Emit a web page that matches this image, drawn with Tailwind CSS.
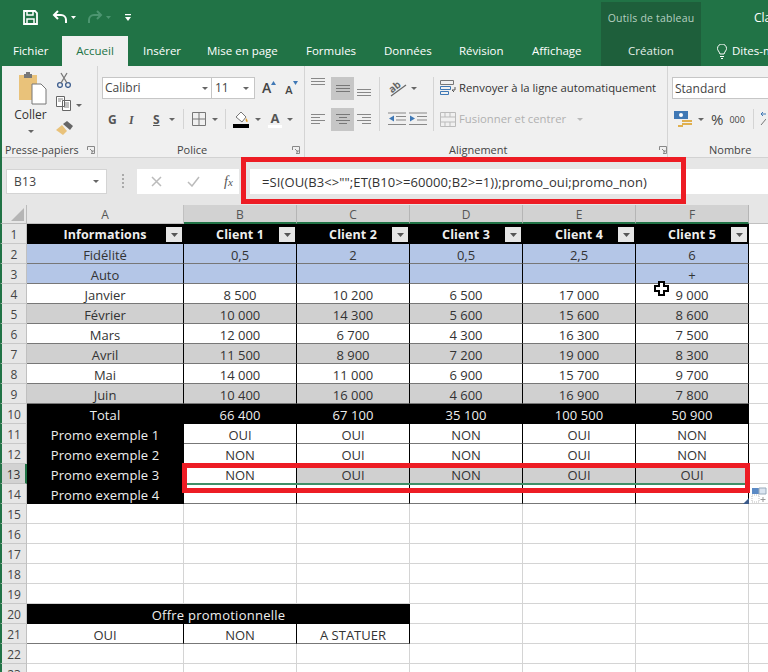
<!DOCTYPE html>
<html lang="fr">
<head>
  <meta charset="UTF-8" />
  <title>Excel - Promo</title>
  <script src="https://cdn.jsdelivr.net/npm/@tailwindcss/browser@4"></script>
</head>
<body class="bg-white">
<div class="relative w-[768px] h-[672px] overflow-hidden font-['Open_Sans',sans-serif] text-[12px] text-[#444]">

  <!-- Barre de titre -->
  <header class="flex h-[36px] bg-[#217346] text-white [&>*]:shrink-0">
    <svg class="ml-[23px] mt-[10px] w-[15px] h-[15px]" viewBox="0 0 15 15" fill="none" stroke="#fff" stroke-width="1.8"><path d="M1 1h11l2 2v11H1z"/><path d="M4 1v4h6V1M4 14V9h7v5" stroke-width="1.5"/></svg>
    <svg class="ml-[14px] mt-[10px] w-[16px] h-[15px]" viewBox="0 0 16 15" fill="none" stroke="#fff" stroke-width="2"><path d="M6 1 2 5l4 4"/><path d="M2 5h7a5 5 0 0 1 5 5v3"/></svg>
    <svg class="ml-[3px] mt-[16px] w-[5px] h-[3px]" viewBox="0 0 5 3" fill="#fff"><path d="M0 0h5L2.500 3z"/></svg>
    <svg class="ml-[11px] mt-[10px] w-[16px] h-[15px]" viewBox="0 0 16 15" fill="none" stroke="#4c9570" stroke-width="2"><path d="m10 1 4 4-4 4"/><path d="M14 5H7a5 5 0 0 0-5 5v3"/></svg>
    <svg class="ml-[3px] mt-[16px] w-[5px] h-[3px]" viewBox="0 0 5 3" fill="#4c9570"><path d="M0 0h5L2.500 3z"/></svg>
    <svg class="ml-[14px] mt-[14px] w-[6px] h-[8px]" viewBox="0 0 6 8" fill="#fff"><path d="M0 0h6v1.200H0zM0 3h6L3 7z"/></svg>
    <div class="ml-[470px] mt-[2px] w-[100px] h-[34px] bg-[#1e5f3b] text-center text-[10.5px] leading-[33px] text-[#b5cfc0] tracking-[0.2px]">Outils de tableau</div>
    <div class="ml-[53px] text-[12px] leading-[36px]">Cla</div>
  </header>

  <!-- Onglets -->
  <nav class="flex h-[30px] bg-[#217346] text-white text-[11.5px] leading-[30px] [&>*]:shrink-0">
    <span class="ml-[13px] w-[49px]">Fichier</span>
    <span class="w-[66px] bg-[#f0f0f0] text-[#217346] text-center">Accueil</span>
    <span class="ml-[15px] w-[64px]">Insérer</span>
    <span class="w-[99px]">Mise en page</span>
    <span class="w-[78px]">Formules</span>
    <span class="w-[75px]">Données</span>
    <span class="w-[73px]">Révision</span>
    <span class="w-[69px]">Affichage</span>
    <span class="w-[100px] bg-[#1e5f3b] text-center text-[#e3eee8]">Création</span>
    <svg class="ml-[16px] mt-[8px] w-[10px] h-[15px]" viewBox="0 0 10 15" fill="none" stroke="#fff"><path d="M3 10C2 7 .5 6.500.5 4.500a4.500 4.500 0 0 1 9 0C9.500 6.500 8 7 7 10zM3 12.500h4M4 14.500h2"/></svg>
    <span class="ml-[5px] whitespace-nowrap">Dites-moi</span>
  </nav>

  <div class="border-l-2 border-[#217346]">
    <!-- Ruban -->
    <section class="flex h-[92px] bg-[#f0f0f0] border-b border-[#d2d2d2] whitespace-nowrap">
      <!-- Presse-papiers -->
      <div class="w-[96px] shrink-0 border-r border-[#d4d4d4] flex flex-col">
        <div class="flex h-[77px]">
          <div class="w-[54px] pl-[3px] flex flex-col items-center pt-[6px]">
            <svg class="w-[29px] h-[33px] ml-[4px]" viewBox="0 0 29 33"><path d="M1 3h18v25H1z" fill="#e9c27a"/><path d="M6 2h8v4H6z" fill="#777"/><path d="M8 0h4v3H8z" fill="#777"/><path d="M14 12h9l5 5v15H14z" fill="#fff" stroke="#777"/></svg>
            <span class="mt-[2px] text-[12px] leading-[16px] text-[#333]">Coller</span>
            <svg class="mt-[7px] w-[6px] h-[3px]" viewBox="0 0 6 3" fill="#666"><path d="M0 0h6L3 3z"/></svg>
          </div>
          <div class="flex flex-col pt-[6px]">
            <svg class="w-[16px] h-[16px]" viewBox="0 0 16 16" fill="none" stroke="#3f5f8f" stroke-width="1.300"><circle cx="4" cy="13" r="2.400"/><circle cx="12" cy="13" r="2.400"/><path d="M5 11 11 1M11 11 5 1" stroke="#777"/></svg>
            <svg class="mt-[8px] w-[16px] h-[15px]" viewBox="0 0 16 15" fill="#fff" stroke="#666"><path d="M.5.500h8v10h-8zM6.500 4.500h8v10h-8z"/><path d="M2 3h5M2 5h3M8 7h5M8 9h5M8 11h5" stroke-width=".8"/></svg>
            <svg class="mt-[10px] w-[17px] h-[14px]" viewBox="0 0 17 14"><path d="M0 9 6 4l5 6-4 4z" fill="#e9c27a"/><path d="m7 3 4-3 6 5-3 4z" fill="#666"/></svg>
          </div>
          <svg class="ml-[3px] mt-[38px] w-[6px] h-[3px]" viewBox="0 0 6 3" fill="#666"><path d="M0 0h6L3 3z"/></svg>
        </div>
        <div class="flex items-center pl-[3px] text-[10.7px] leading-[14px] text-[#444]"><span class="w-[82px]">Presse-papiers</span><svg class="w-[8px] h-[8px]" viewBox="0 0 8 8" fill="none" stroke="#888"><path d="M.5 4V.5H7.500V7.500H4M3 3l3 3M6 4v2H4"/></svg></div>
      </div>

      <!-- Police -->
      <div class="w-[207px] shrink-0 border-r border-[#d4d4d4] flex flex-col">
        <div class="h-[77px] pl-[4px] pt-[11px]">
          <div class="flex items-center h-[22px]">
            <div class="w-[110px] h-[22px] bg-white border border-[#c6c6c6] pl-[2px] leading-[22px] text-[12px] flex justify-between items-center"><span>Calibri</span><svg class="mr-[3px] w-[6px] h-[3px]" viewBox="0 0 6 3" fill="#666"><path d="M0 0h6L3 3z"/></svg></div>
            <div class="w-[43px] h-[22px] bg-white border border-l-0 border-[#c6c6c6] pl-[3px] text-[12px] leading-[22px] flex justify-between items-center"><span>11</span><svg class="mr-[5px] w-[6px] h-[3px]" viewBox="0 0 6 3" fill="#666"><path d="M0 0h6L3 3z"/></svg></div>
            <span class="ml-[7px] text-[14px] font-semibold leading-none">A</span><svg class="mb-[10px] w-[5px] h-[4px]" viewBox="0 0 5 4" fill="#3f78b5"><path d="M0 4h5L2.500 0z"/></svg>
            <span class="ml-[9px] text-[11px] font-semibold leading-none mt-[2px]">A</span><svg class="mb-[10px] w-[5px] h-[4px]" viewBox="0 0 5 4" fill="#3f78b5"><path d="M0 0h5L2.500 4z"/></svg>
          </div>
          <div class="flex items-center h-[22px] mt-[9px] text-[#555]">
            <span class="ml-[6px] mt-[1px] w-[21px] text-[12px] font-bold">G</span>
            <span class="w-[24px] mt-[1px] text-[12px] italic font-bold font-['Liberation_Serif',serif]">I</span>
            <span class="w-[16px] mt-[1px] text-[12px] font-bold underline">S</span>
            <svg class="w-[6px] h-[3px]" viewBox="0 0 6 3" fill="#666"><path d="M0 0h6L3 3z"/></svg>
            <div class="ml-[8px] w-px h-[20px] bg-[#d4d4d4]"></div>
            <svg class="ml-[8px] w-[14px] h-[14px]" viewBox="0 0 14 14" fill="none" stroke="#777"><path d="M.5.500h13v13H.500zM7 .5v13M.5 7h13"/></svg>
            <svg class="ml-[6px] w-[6px] h-[3px]" viewBox="0 0 6 3" fill="#666"><path d="M0 0h6L3 3z"/></svg>
            <div class="ml-[7px] w-px h-[20px] bg-[#d4d4d4]"></div>
            <svg class="ml-[7px] w-[16px] h-[18px]" viewBox="0 0 16 18"><path d="M3 7 8 2l5 5-4 5z" fill="#fff" stroke="#777"/><path d="M13 8c2 2 2 4 1 4s-2-2-1-4z" fill="#e0a030"/><path d="M0 14h16v4H0z" fill="#000"/></svg>
            <svg class="ml-[6px] w-[6px] h-[3px]" viewBox="0 0 6 3" fill="#666"><path d="M0 0h6L3 3z"/></svg>
            <div class="ml-[7px] flex flex-col items-center w-[14px]"><span class="text-[13px] font-bold leading-[14px]">A</span><div class="w-[14px] h-[3px] bg-white"></div></div>
            <svg class="ml-[5px] w-[6px] h-[3px]" viewBox="0 0 6 3" fill="#666"><path d="M0 0h6L3 3z"/></svg>
          </div>
        </div>
        <div class="flex items-center text-[11px] leading-[14px]"><span class="ml-[79px] w-[115px]">Police</span><svg class="w-[8px] h-[8px]" viewBox="0 0 8 8" fill="none" stroke="#888"><path d="M.5 4V.5H7.500V7.500H4M3 3l3 3M6 4v2H4"/></svg></div>
      </div>

      <!-- Alignement -->
      <div class="w-[363px] shrink-0 border-r border-[#d4d4d4] flex flex-col">
        <div class="h-[77px] flex pt-[11px]">
          <div class="ml-[6px] w-[67px] grid grid-cols-[20px_23px_23px] grid-rows-[23px_23px] gap-y-[8px]">
            <svg class="w-[14px] h-[14px]" viewBox="0 0 14 14" stroke="#888"><path d="M0 1.500h14M0 4.500h14M0 7.500h14"/></svg>
            <div class="bg-[#c6c6c6] flex items-center justify-center"><svg class="w-[14px] h-[10px]" viewBox="0 0 14 10" stroke="#777"><path d="M0 1.500h14M0 4.500h14M0 7.500h14"/></svg></div>
            <svg class="mt-[10px] ml-[3px] w-[14px] h-[11px]" viewBox="0 0 14 11" stroke="#888"><path d="M0 2.500h14M0 5.500h14M0 8.500h14"/></svg>
            <svg class="mt-[5px] w-[14px] h-[13px]" viewBox="0 0 14 13" stroke="#888"><path d="M0 1.500h14M0 4.500h9M0 7.500h14M0 10.500h9"/></svg>
            <div class="bg-[#c6c6c6] flex items-center justify-center"><svg class="w-[14px] h-[13px]" viewBox="0 0 14 13" stroke="#777"><path d="M0 1.500h14M3 4.500h8M0 7.500h14M3 10.500h8"/></svg></div>
            <svg class="mt-[5px] ml-[3px] w-[14px] h-[13px]" viewBox="0 0 14 13" stroke="#888"><path d="M0 1.500h14M5 4.500h9M0 7.500h14M5 10.500h9"/></svg>
          </div>
          <div class="ml-[1px] w-px h-[54px] bg-[#d4d4d4]"></div>
          <div class="w-[53px] pl-[8px]">
            <div class="flex items-center h-[22px]"><svg class="w-[20px] h-[18px]" viewBox="0 0 20 18" fill="#666" stroke="none"><text x="1" y="12" font-size="10" font-weight="700" transform="rotate(-40 6 9)">ab</text><path d="M3 17 18 6" fill="none" stroke="#666" stroke-width="1.200"/></svg><svg class="ml-[3px] w-[6px] h-[3px]" viewBox="0 0 6 3" fill="#666"><path d="M0 0h6L3 3z"/></svg></div>
            <div class="flex items-center h-[22px] mt-[9px] gap-[3px]">
              <svg class="w-[18px] h-[14px]" viewBox="0 0 18 14" stroke="#888"><path d="M0 1h18M8 4.500h10M8 8h10M0 12.500h18"/><path d="M6 3.500 1 6.500l5 3z" fill="#3f78b5" stroke="none"/></svg>
              <svg class="w-[18px] h-[14px]" viewBox="0 0 18 14" stroke="#888"><path d="M0 1h18M8 4.500h10M8 8h10M0 12.500h18"/><path d="M1 3.500l5 3-5 3z" fill="#3f78b5" stroke="none"/></svg>
            </div>
          </div>
          <div class="w-px h-[54px] bg-[#d4d4d4]"></div>
          <div class="pl-[6px]">
            <div class="flex items-center h-[22px] gap-[3px]"><svg class="w-[16px] h-[16px]" viewBox="0 0 16 16" fill="none" stroke="#777"><path d="M.5.500h13v4H.500z"/><path d="M.5 6.500h10v3H.500zM.5 11.500h8v3h-8z" stroke="#3f78b5"/><path d="M15 7v3h-3l2 2" stroke="#555"/></svg><span class="mt-[1px] text-[11.3px] text-[#333]">Renvoyer à la ligne automatiquement</span></div>
            <div class="flex items-center h-[22px] mt-[9px] gap-[3px] text-[#b0b0b0]"><svg class="w-[16px] h-[15px]" viewBox="0 0 16 15" fill="none" stroke="#bbb"><path d="M.5.500h15v14H.500zM.5 5h15M.5 10h15M5 .5V5M10 .5V5M5 10v4.500M10 10v4.500"/></svg><span class="mt-[1px] text-[11.3px]">Fusionner et centrer</span><svg class="ml-[8px] w-[6px] h-[3px]" viewBox="0 0 6 3" fill="#bbb"><path d="M0 0h6L3 3z"/></svg></div>
          </div>
        </div>
        <div class="flex items-center text-[11px] leading-[14px]"><span class="ml-[144px] w-[211px]">Alignement</span><svg class="w-[8px] h-[8px]" viewBox="0 0 8 8" fill="none" stroke="#888"><path d="M.5 4V.5H7.500V7.500H4M3 3l3 3M6 4v2H4"/></svg></div>
      </div>

      <!-- Nombre -->
      <div class="flex-1 flex flex-col">
        <div class="h-[77px] pl-[4px] pt-[11px]">
          <div class="w-[120px] h-[22px] bg-white border border-[#c6c6c6] pl-[2px] text-[12px] leading-[22px]">Standard</div>
          <div class="flex items-center h-[22px] mt-[9px]">
            <svg class="ml-[2px] w-[18px] h-[16px]" viewBox="0 0 18 16"><path d="M0 0h14v8H0z" fill="#3f78b5"/><circle cx="7" cy="4" r="2" fill="#fff"/><path d="M8 9h10v2H8zM8 12h10v2H8z" fill="#e0b050"/><path d="M4 14h5v2H4z" fill="#e0b050"/></svg>
            <svg class="ml-[6px] w-[6px] h-[3px]" viewBox="0 0 6 3" fill="#666"><path d="M0 0h6L3 3z"/></svg>
            <span class="ml-[7px] text-[15px] leading-none">%</span>
            <span class="ml-[6px] text-[9px] leading-none">000</span>
            <div class="ml-[8px] w-px h-[20px] bg-[#d4d4d4]"></div>
            <svg class="ml-[6px] w-[6px] h-[16px]" viewBox="0 0 6 16" fill="none" stroke="#3f78b5"><path d="M6 3H1M3 1 1 3l2 2"/><path d="M1 14 6 8" stroke="#777"/></svg>
          </div>
        </div>
        <div class="pl-[41px] text-[11px] leading-[14px]">Nombre</div>
      </div>
    </section>

    <!-- Barre de formule -->
    <section class="flex h-[47px] bg-[#e6e6e6] pt-[11px] text-[12px]">
      <div class="ml-[4px] w-[101px] h-[25px] bg-white border border-[#d4d4d4] flex items-center justify-between px-[7px]"><span class="text-[12px] tracking-[0.3px]">B13</span><svg class="w-[6px] h-[3px]" viewBox="0 0 6 3" fill="#666"><path d="M0 0h6L3 3z"/></svg></div>
      <div class="ml-[15px] w-[3px] h-[14px] mt-[5px] border-l-2 border-dotted border-[#aaa]"></div>
      <div class="ml-[12px] w-[102px] h-[25px] bg-white flex items-center">
        <svg class="ml-[14px] w-[11px] h-[11px]" viewBox="0 0 11 11" stroke="#bbb" stroke-width="1.500"><path d="m1 1 9 9M10 1 1 10"/></svg>
        <svg class="ml-[25px] w-[13px] h-[11px]" viewBox="0 0 13 11" fill="none" stroke="#bbb" stroke-width="1.500"><path d="m1 6 4 4 7-9"/></svg>
        <span class="ml-[24px] font-['Liberation_Serif',serif] italic text-[14px] text-[#555]">f<span class="text-[11px]">x</span></span>
      </div>
      <div class="ml-[11px] flex-1 h-[25px] bg-white pl-[12px] text-[13px] tracking-[0.1px] leading-[27px] whitespace-nowrap text-[#333]">=SI(OU(B3&lt;&gt;"";ET(B10&gt;=60000;B2&gt;=1));promo_oui;promo_non)</div>
    </section>
  </div>

  <!-- Feuille -->
  <main id="sheet" class="grid grid-cols-[27px_157px_113px_113px_113px_113px_113px_19px] grid-rows-[19px] auto-rows-[20px] text-[13px] leading-[22px] text-center"></main>

  <!-- Encadrés rouges et curseur -->
  <div class="absolute left-[241px] top-[157px] w-[445px] h-[47px] border-[5px] border-[#ed1c24]"></div>
  <div class="absolute left-[182px] top-[463px] w-[568px] h-[30px] border-[5px] border-[#ed1c24]"></div>
  <svg class="absolute left-[654px] top-[281px] w-[15px] h-[15px]" viewBox="0 0 15 15" fill="#fff" stroke="#000" stroke-width="2"><path d="M5 1h5v4h4v5h-4v4H5v-4H1V5h4z"/></svg>
  <svg class="absolute left-[751px] top-[487px] w-[17px] h-[17px]" viewBox="0 0 17 17" fill="none"><path d="M1 1h7v6H1z" fill="#5b8ac5"/><path d="M8 1h7v6H8z" fill="#dbe5f1" stroke="#9ab"/><path d="M1 8h7v7H1z" stroke="#bbb" stroke-dasharray="1 1"/><path d="M12 10v5M9.500 12.500h5" stroke="#999"/></svg>
  <svg class="absolute left-[743px] top-[498px] w-[6px] h-[6px]" viewBox="0 0 6 6" fill="#3b5a8a"><path d="M6 0v6H0z"/></svg>

  <script>
    const rows = {
      1: ['Informations','Client 1','Client 2','Client 3','Client 4','Client 5'],
      2: ['Fidélité','0,5','2','0,5','2,5','6'],
      3: ['Auto','','','','','+'],
      4: ['Janvier','8 500','10 200','6 500','17 000','9 000'],
      5: ['Février','10 000','14 300','5 600','15 600','8 600'],
      6: ['Mars','12 000','6 700','4 300','16 300','7 500'],
      7: ['Avril','11 500','8 900','7 200','19 000','8 300'],
      8: ['Mai','14 000','11 000','6 900','15 700','9 700'],
      9: ['Juin','10 400','16 000','4 600','16 900','7 800'],
      10: ['Total','66 400','67 100','35 100','100 500','50 900'],
      11: ['Promo exemple 1','OUI','OUI','NON','OUI','NON'],
      12: ['Promo exemple 2','NON','OUI','NON','OUI','NON'],
      13: ['Promo exemple 3','NON','OUI','NON','OUI','OUI'],
      14: ['Promo exemple 4','','','','','']
    };
    const GRID = 'border-r border-b border-[#d4d4d4]';
    const BLACK = 'bg-black text-[#eee] border-r border-black tracking-[0.1px]';
    const TABLE = 'border-r border-black border-b border-b-[#777] text-[#333] ';

    function cell(text, cls) {
      const d = document.createElement('div');
      d.className = 'overflow-hidden whitespace-nowrap ' + cls;
      d.textContent = text;
      return d;
    }

    const sheet = document.getElementById('sheet');
    // en-têtes de colonnes
    const corner = cell('', 'bg-[#e6e6e6] border-l-2 border-l-[#217346] border-r border-b border-[#bbb] relative');
    corner.innerHTML = '<svg class="absolute right-[2px] bottom-[2px] w-[13px] h-[13px]" viewBox="0 0 13 13" fill="#b5b5b5"><path d="M13 0v13H0z"/></svg>';
    sheet.append(corner);
    'ABCDEF'.split('').forEach((l, i) => {
      sheet.append(cell(l, i === 0
        ? 'bg-[#e6e6e6] border-r border-b border-[#c0c0c0] text-[#555] text-[12px] leading-[19px]'
        : 'bg-[#d2d2d2] border-r border-[#b5b5b5] border-b-2 border-b-[#217346] text-[#555] text-[12px] leading-[19px]'));
    });
    sheet.append(cell('', 'bg-[#e6e6e6] border-b border-[#c0c0c0]'));

    for (let r = 1; r <= 23; r++) {
      const head = cell(r, r === 13
        ? 'bg-[#d2d2d2] text-[#333] border-l-2 border-[#217346] border-b border-b-[#c0c0c0] border-r-2 border-r-[#217346] text-[12px]'
        : 'bg-[#e6e6e6] text-[#444] border-l-2 border-[#217346] border-b border-b-[#c8c8c8] border-r border-r-[#c0c0c0] text-[12px]');
      sheet.append(head);
      const data = rows[r];
      for (let c = 0; c < 6; c++) {
        let cls = GRID, text = data ? data[c] : '';
        if (data) {
          if (r === 1) cls = BLACK + ' font-bold text-[12.5px] relative';
          else if (r === 10 || (c === 0 && r > 10)) cls = BLACK;
          else if (r <= 3) cls = TABLE + 'bg-[#b4c6e7]';
          else if (r === 13 && c === 1) cls = TABLE + 'bg-white';
          else if (r === 5 || r === 7 || r === 9 || r === 13) cls = TABLE + 'bg-[#d0d0d0]';
          else cls = TABLE + 'bg-white';
        }
        if (r === 21 && c < 3) { cls = TABLE; text = ['OUI','NON','A STATUER'][c]; }
        const d = cell(text, cls);
        if (r === 1) {
          d.innerHTML = text + '<span class="absolute right-[1px] top-[3px] w-[16px] h-[15px] bg-[#e6e6e6] flex items-center justify-center"><svg class="w-[7px] h-[4px]" viewBox="0 0 7 4" fill="#555"><path d="M0 0h7L3.500 4z"/></svg></span>';
        }
        if (r === 20 && c === 0) {
          d.className = 'col-span-3 bg-black text-[#eee] whitespace-nowrap tracking-[0.25px]';
          d.textContent = 'Offre promotionnelle';
          sheet.append(d);
          c = 2;
          continue;
        }
        sheet.append(d);
      }
      sheet.append(cell('', 'border-b border-[#d4d4d4]'));
    }
  </script>
  <div class="absolute left-[187px] top-[483px] w-[558px] h-[2px] bg-[#3f8f68]"></div>
</div>
</body>
</html>
